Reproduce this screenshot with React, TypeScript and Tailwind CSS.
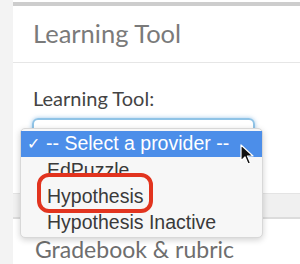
import React from 'react';

const options = ['EdPuzzle', 'Hypothesis', 'Hypothesis Inactive'];

export default function App() {
  return (
    <div className="relative flex w-[300px] h-[264px] overflow-hidden bg-[#f3f3f3] font-['Lato',sans-serif]">
      {/* left gutter */}
      <div className="w-[13px] shrink-0" />

      {/* page body */}
      <div className="flex-1 flex flex-col bg-white pt-[2px]">
        <div className="h-[4px] bg-[#cdcdcd]" />
        <div className="h-[57px] flex items-center px-[20px] border-b border-[#e6e6e6]">
          <h2 className="text-[25.5px] text-[#7a7a7a] leading-none pb-[1px]">Learning Tool</h2>
        </div>
        <div className="h-[130px] px-[19px] pt-[25px]">
          <label className="block text-[20px] text-[#444] leading-none pl-[1px]">Learning Tool:</label>
          <div className="mt-[10px] h-[34px] w-[223px] rounded-[6px] border-2 border-[#8fc3e6] shadow-[0_0_4px_rgba(90,160,220,0.6)]" />
        </div>
        <div className="h-[26px] bg-[#f0f0f0] border-t border-[#e4e4e4] border-b-2 border-b-[#dcdcdc]" />
        <div className="px-[22px] pt-[19px]">
          <h2 className="text-[23px] text-[#6e6e6e] leading-none">Gradebook &amp; rubric</h2>
        </div>
      </div>

      {/* open select menu */}
      <div className="absolute left-[20px] top-[128px] w-[243px] h-[110px] rounded-[5px] bg-[#f7f7f7] border border-[#d8d8d8] shadow-[0_2px_6px_rgba(0,0,0,0.18)] pt-[2px] font-['Liberation_Sans',Arial,sans-serif] text-[19.5px]">
        <div className="h-[26px] flex items-center bg-[#4c8ee9] text-white">
          <span className="w-[25px] pl-[6px] text-[16px]">✓</span>
          <span>-- Select a provider --</span>
        </div>
        {options.map((o) => (
          <div key={o} className="h-[26px] flex items-center pl-[26px] pt-[2px] text-[#3a3a3a]">
            {o}
          </div>
        ))}
      </div>

      {/* red highlight around Hypothesis */}
      <div className="absolute left-[37px] top-[173px] w-[116px] h-[40px] rounded-[12px] border-[4px] border-[#e2341f]" />

      {/* mouse cursor */}
      <svg className="absolute left-[240px] top-[144px]" width="14" height="22" viewBox="0 0 14 22">
        <path d="M1 1 L1 17 L5 13 L8 20 L10.5 19 L7.5 12 L13 12 Z" fill="#111" stroke="#fff" strokeWidth="1.2" strokeLinejoin="round" />
      </svg>
    </div>
  );
}
